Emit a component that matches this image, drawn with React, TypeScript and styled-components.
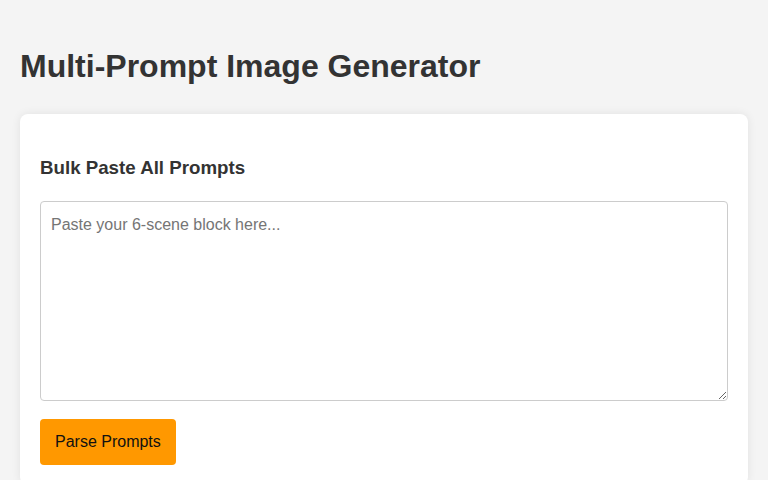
import styled, { createGlobalStyle } from "styled-components";

const GlobalStyle = createGlobalStyle`
  body {
    margin: 0;
    padding: 20px;
    background-color: #f4f4f4;
    font-family: "Liberation Sans", Arial, sans-serif;
    color: #333;
  }
`;

const Title = styled.h1`
  font-size: 32px;
  font-weight: bold;
  margin: 28px 0 29px;
  line-height: 37px;
`;

const Card = styled.div`
  background-color: white;
  border-radius: 8px;
  box-shadow: 0 0 10px rgba(0, 0, 0, 0.08);
  padding: 20px;
`;

const SectionTitle = styled.h3`
  font-size: 18.72px;
  font-weight: bold;
  line-height: 22px;
  margin: 23px 0 22px;
`;

const PromptInput = styled.textarea`
  display: block;
  box-sizing: border-box;
  width: 100%;
  height: 200px;
  padding: 14px 10px 10px;
  border: 1px solid #ccc;
  border-radius: 4px;
  font-family: "Liberation Sans", Arial, sans-serif;
  font-size: 16px;
  color: #333;
  margin-bottom: 18px;

  &::placeholder {
    color: #757575;
  }
`;

const Button = styled.button`
  background-color: #ff9800;
  color: #111;
  border: none;
  border-radius: 4px;
  padding: 14px 15px;
  font-family: "Liberation Sans", Arial, sans-serif;
  font-size: 16px;
  line-height: 18px;
  cursor: pointer;
`;

export default function App() {
  return (
    <>
      <GlobalStyle />
      <Title>Multi-Prompt Image Generator</Title>
      <Card>
        <SectionTitle>Bulk Paste All Prompts</SectionTitle>
        <PromptInput placeholder="Paste your 6-scene block here..." />
        <Button>Parse Prompts</Button>
      </Card>
    </>
  );
}
